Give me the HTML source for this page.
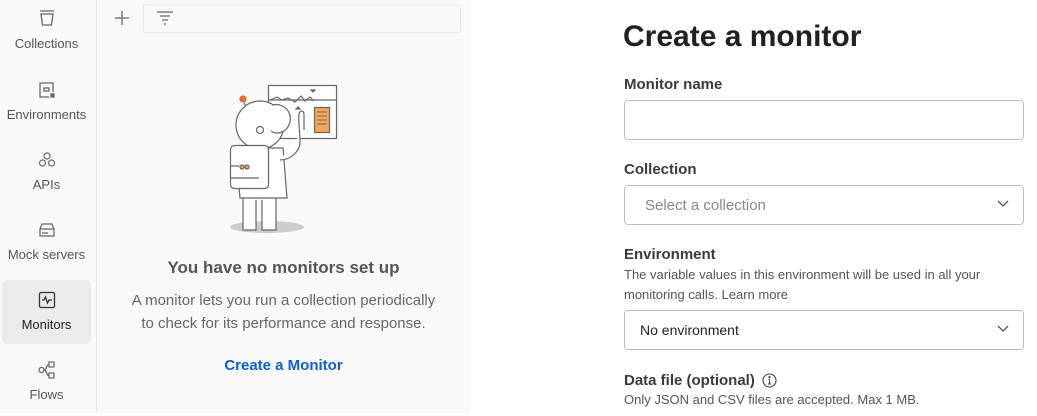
<!DOCTYPE html>
<html><head><style>
*{margin:0;padding:0;box-sizing:border-box}
body{width:1037px;height:413px;overflow:hidden;background:#fff;font-family:"Liberation Sans",sans-serif;position:relative}
.sb{position:absolute;left:0;top:0;width:97px;height:413px;background:#f9f9f9;border-right:1px solid #e6e6e6}
.it{position:absolute;left:2px;width:89px;height:64px;border-radius:5px;text-align:center;font-size:13px;color:#555}
.it svg{position:absolute;left:35px;top:8px}
.it span{position:absolute;left:0;right:0;top:37px}
.mid{position:absolute;left:97px;top:0;width:373px;height:413px;background:#f9f9f9}
.ab{position:absolute;font-size:13px;color:#222}
.lbl{position:absolute;left:624px;font-size:15px;font-weight:bold;color:#3a3a3a}
.box{position:absolute;left:624px;width:400px;height:40px;border:1px solid #bdbdbd;border-radius:4px;font-size:15px}
.box span{position:absolute;left:15px;top:10px}
.box svg{position:absolute;right:14px;top:14px}
.hint{position:absolute;left:624px;font-size:13px;color:#555;line-height:20px}
</style></head><body>
<div class="sb">
 <div class="it" style="top:0px"><svg width="20" height="20" viewBox="0 0 20 20" fill="none" stroke="#666" stroke-width="1.3"><path d="M3 3h14M4 6h12l-1.5 11h-9z"/></svg><span style="top:36px">Collections</span></div>
 <div class="it" style="top:72px"><svg width="20" height="20" viewBox="0 0 20 20" fill="none" stroke="#666" stroke-width="1.3"><path d="M16 12V3H3v14h9"/><rect x="7" y="8" width="5" height="3"/><rect x="14" y="14" width="3" height="3" fill="#666"/></svg><span style="top:35px">Environments</span></div>
 <div class="it" style="top:142px"><svg width="20" height="20" viewBox="0 0 20 20" fill="none" stroke="#666" stroke-width="1.2"><circle cx="10" cy="6" r="3"/><circle cx="5.5" cy="13" r="3"/><circle cx="14.5" cy="13" r="3"/></svg><span style="top:35px">APIs</span></div>
 <div class="it" style="top:212px"><svg width="20" height="20" viewBox="0 0 20 20" fill="none" stroke="#666" stroke-width="1.2"><path d="M3 9l2-5h10l2 5v7H3z M3 9h14"/><path d="M6 14v-2M8 14v-2M10 14v-2"/></svg><span style="top:35px">Mock servers</span></div>
 <div class="it" style="top:280px;background:#ebebeb;height:64px"><svg width="20" height="20" viewBox="0 0 20 20" fill="none" stroke="#333" stroke-width="1.3" style="top:10px"><rect x="2.5" y="2.5" width="15" height="15" rx="1.5"/><path d="M5 10h2l1.5-3 2 6 1.5-3h3"/></svg><span style="top:37px;color:#222">Monitors</span></div>
 <div class="it" style="top:352px"><svg width="20" height="20" viewBox="0 0 20 20" fill="none" stroke="#666" stroke-width="1.2"><circle cx="4.5" cy="10" r="2.5"/><rect x="12" y="2" width="5" height="5"/><rect x="12" y="13" width="5" height="5"/><path d="M7 10c3 0 2-5.5 5-5.5M7 10c3 0 2 5.5 5 5.5"/></svg><span style="top:35px">Flows</span></div>
</div>
<div class="mid">
 <svg style="position:absolute;left:16px;top:9px" width="18" height="18" viewBox="0 0 18 18" stroke="#666" stroke-width="1.3"><path d="M9 2v14M2 9h14"/></svg>
 <div style="position:absolute;left:46px;top:4px;width:318px;height:29px;border:1px solid #e8e8e8;border-radius:3px;background:#f9f9f9"></div>
 <svg style="position:absolute;left:59px;top:10px" width="18" height="16" viewBox="0 0 18 16" stroke="#666" stroke-width="1.2"><path d="M1 2h16M4 6h10M6 10h6M8 14h2"/></svg>
 <svg style="position:absolute;left:128px;top:84px" width="120" height="152" viewBox="225 84 120 152" fill="#fff" stroke="#666" stroke-width="1.2">
  <ellipse cx="267" cy="227" rx="37" ry="6" fill="#ccc" stroke="none"/>
  <rect x="268.5" y="85.5" width="68" height="53"/>
  <path d="M269 100h67" fill="none"/>
  <path d="M270 100l7-3 5 3 6-2 7 4 6-6 4 5 5-4 4 4" fill="none"/>
  <path d="M311 90l2 2 2-2z" fill="#666"/><path d="M296 109l2-2 2 2z" fill="#666"/>
  <rect x="314.5" y="107.5" width="15" height="25" fill="#f6a55a"/>
  <path d="M317 112h10M317 116h10M317 120h10M317 124h10" stroke="#555" stroke-width="0.8"/>
  <path d="M244 103l3 5" fill="none"/>
  <circle cx="243" cy="99" r="3" fill="#f06e3d" stroke="#e06030"/>
  <path d="M243 196v34h13v-30M262 200v30h14v-34" />
  <path d="M236 148h47l4 50h-47z"/>
  <path d="M280 160c12 0 20-10 20-18 0-10-2-22-1-28 1-4 5-4 5 1v15" />
  <circle cx="260" cy="125" r="24"/>
  <path d="M272 105c12-3 22 8 17 20-4 8-12 10-18 6" />
  <circle cx="260" cy="130" r="3.5"/>
  <rect x="230.5" y="145.5" width="38" height="43" rx="4"/>
  <path d="M231 166h8M231 178h28" fill="none"/>
  <circle cx="242" cy="167" r="2" fill="#f6a55a"/><circle cx="247" cy="167" r="2" fill="#f6a55a"/>
 </svg>
 <div class="ab" style="left:0;width:373px;top:258px;text-align:center;font-size:17px;font-weight:bold;color:#555">You have no monitors set up</div>
 <div class="ab" style="left:0;width:373px;top:289px;text-align:center;font-size:15px;color:#666;line-height:23px">A monitor lets you run a collection periodically<br>to check for its performance and response.</div>
 <div class="ab" style="left:0;width:373px;top:357px;text-align:center;font-size:15px;font-weight:bold;color:#0b5fd6">Create a Monitor</div>
</div>
<div style="position:absolute;left:623px;top:20px;font-size:30px;font-weight:bold;color:#212121">Create a monitor</div>
<div class="lbl" style="top:76px">Monitor name</div>
<div class="box" style="top:100px"></div>
<div class="lbl" style="top:161px">Collection</div>
<div class="box" style="top:185px"><span style="color:#888;left:20px;top:11px">Select a collection</span><svg width="12" height="8" viewBox="0 0 12 8" fill="none" stroke="#555" stroke-width="1.3"><path d="M1 1l5 5 5-5"/></svg></div>
<div class="lbl" style="top:246px">Environment</div>
<div class="hint" style="top:265px">The variable values in this environment will be used in all your<br>monitoring calls. Learn more</div>
<div class="box" style="top:310px;font-size:14px"><span style="color:#222;top:11px">No environment</span><svg width="12" height="8" viewBox="0 0 12 8" fill="none" stroke="#555" stroke-width="1.3"><path d="M1 1l5 5 5-5"/></svg></div>
<div class="lbl" style="top:372px">Data file (optional)</div>
<svg style="position:absolute;left:762px;top:373px" width="15" height="15" viewBox="0 0 15 15" fill="none" stroke="#444" stroke-width="1.1"><circle cx="7.5" cy="7.5" r="6.5"/><path d="M7.5 6.5v4.5M6 11h3M6.5 6.5h1"/><circle cx="7.5" cy="4.2" r="0.6" fill="#444"/></svg>
<div class="hint" style="top:390px">Only JSON and CSV files are accepted. Max 1 MB.</div>
</body></html>
